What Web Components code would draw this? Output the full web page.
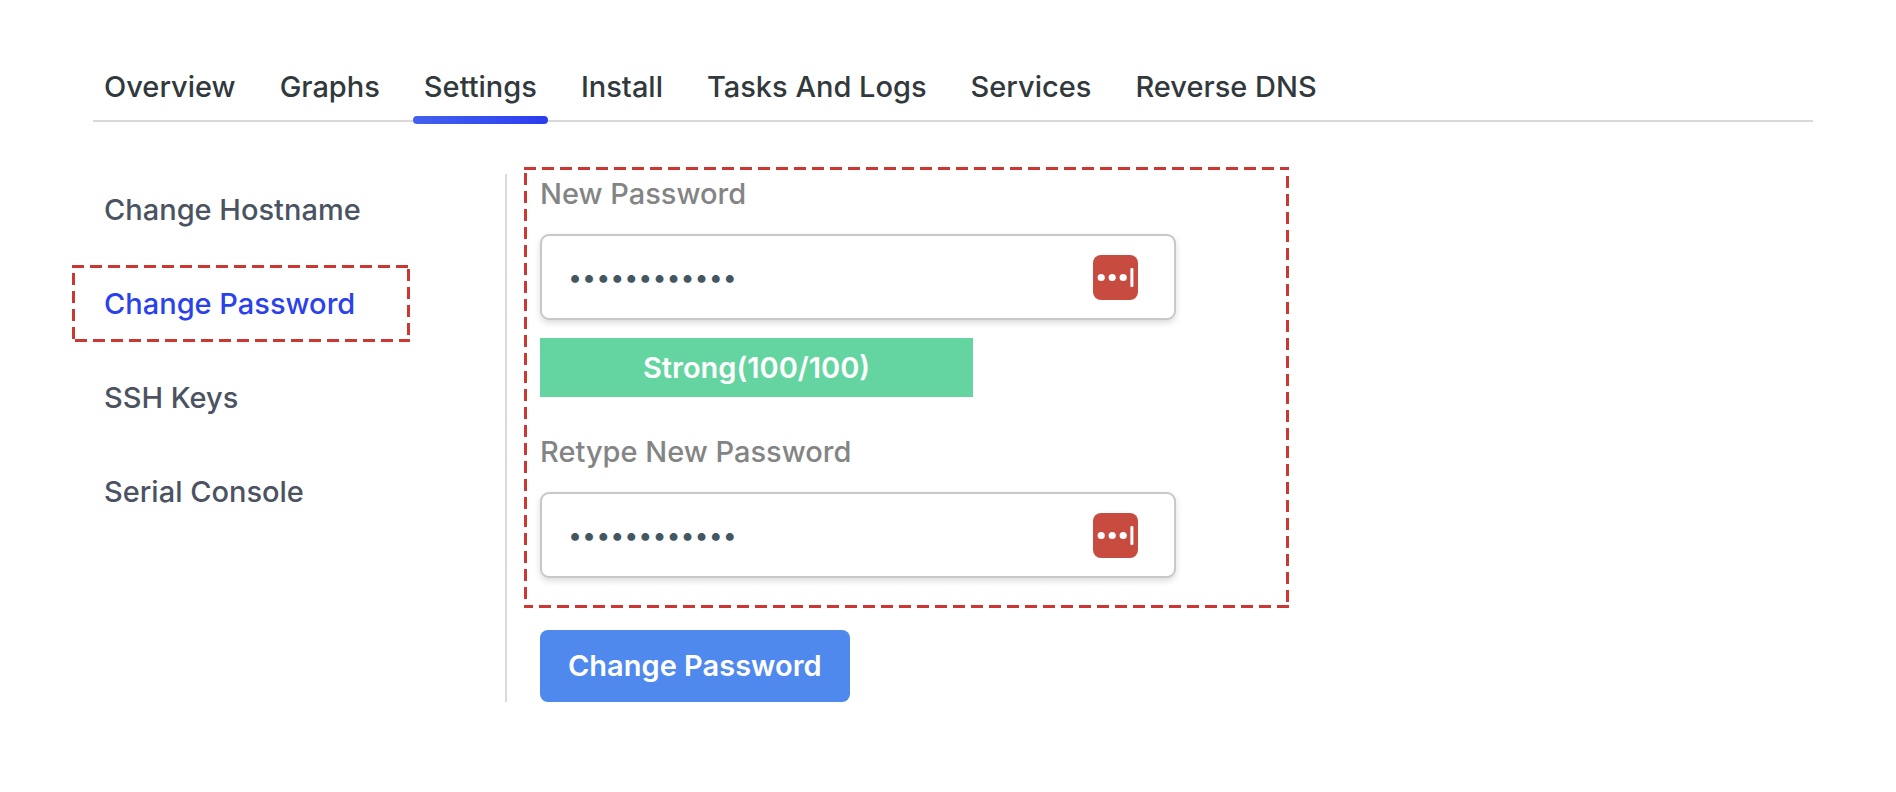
<!DOCTYPE html>
<html lang="en">
<head>
<meta charset="utf-8">
<title>Settings - Change Password</title>
<style>
	body {
		margin: 0;
		background: #FFFFFF;
		font-family: Inter, "Open Sans", sans-serif;
		font-size: 29px;
		font-weight: 500;
		line-height: 40px;
	}
</style>
</head>
<body>
<server-page>
	<tab-bar slot="tabs">
		<tab-link href="#overview">Overview</tab-link>
		<tab-link href="#graphs">Graphs</tab-link>
		<tab-link href="#settings" active>Settings</tab-link>
		<tab-link href="#install">Install</tab-link>
		<tab-link href="#tasks">Tasks And Logs</tab-link>
		<tab-link href="#services">Services</tab-link>
		<tab-link href="#rdns">Reverse DNS</tab-link>
	</tab-bar>
	<side-menu slot="menu">
		<menu-link href="#hostname">Change Hostname</menu-link>
		<dashed-callout class="menu-callout">
			<menu-link href="#password" active>Change Password</menu-link>
		</dashed-callout>
		<menu-link href="#ssh">SSH Keys</menu-link>
		<menu-link href="#console">Serial Console</menu-link>
	</side-menu>
	<password-form></password-form>
</server-page>

<script>
class ServerPage extends HTMLElement {
	constructor() {
		super();
		let shadowRoot = this.attachShadow({mode: 'open'});
		shadowRoot.innerHTML = `
		<style>
		:host {
			display: block;
			padding: 67px 83px 60px 93px;
		}
		.content {
			display: grid;
			grid-template-columns: 414px 1fr;
			column-gap: 33px;
			margin-top: 52px;
		}
		</style>
		<slot name="tabs"></slot>
		<div class="content">
			<slot name="menu"></slot>
			<main><slot></slot></main>
		</div>`;
	}
}
window.customElements.define('server-page', ServerPage);

class TabBar extends HTMLElement {
	constructor() {
		super();
		let shadowRoot = this.attachShadow({mode: 'open'});
		shadowRoot.innerHTML = `
		<style>
		:host {
			display: block;
			border-bottom: 2px solid #DBD8D8;
		}
		nav {
			display: flex;
			gap: 22px;
		}
		</style>
		<nav aria-label="Server"><slot></slot></nav>`;
	}
}
window.customElements.define('tab-bar', TabBar);

class BaseLink extends HTMLElement {
	connectedCallback() {
		const link = this.shadowRoot.querySelector('a');
		link.href = this.getAttribute('href');
		if (this.hasAttribute('active')) link.setAttribute('aria-current', 'page');
	}
}

class TabLink extends BaseLink {
	constructor() {
		super();
		let shadowRoot = this.attachShadow({mode: 'open'});
		shadowRoot.innerHTML = `
		<style>
		:host {
			display: block;
			position: relative;
			white-space: nowrap;
		}
		a {
			display: block;
			padding: 0 11px 13px;
			color: #32393D;
			text-decoration: none;
		}
		/* marker lies over the rule of the bar */
		:host([active])::after {
			content: '';
			position: absolute;
			left: 0;
			right: 0;
			bottom: -4px;
			height: 8px;
			border-radius: 4px;
			background: linear-gradient(90deg, #4361EE, #2B3DF0);
		}
		</style>
		<a><slot></slot></a>`;
	}
}
window.customElements.define('tab-link', TabLink);

class SideMenu extends HTMLElement {
	constructor() {
		super();
		let shadowRoot = this.attachShadow({mode: 'open'});
		shadowRoot.innerHTML = `
		<style>
		:host {
			display: block;
			box-sizing: border-box;
			padding: 16px 0 0 11px;
			border-right: 2px solid #DCD9DB;
		}
		nav {
			display: flex;
			flex-direction: column;
			gap: 54px;
		}
		::slotted(.menu-callout) {
			--callout-inset: -19px 95px -18px -32px;
		}
		</style>
		<nav aria-label="Settings"><slot></slot></nav>`;
	}
}
window.customElements.define('side-menu', SideMenu);

class MenuLink extends BaseLink {
	constructor() {
		super();
		let shadowRoot = this.attachShadow({mode: 'open'});
		shadowRoot.innerHTML = `
		<style>
		:host {
			display: block;
		}
		a {
			color: #4B5362;
			text-decoration: none;
		}
		:host([active]) a {
			color: #2A41EC;
		}
		</style>
		<a><slot></slot></a>`;
	}
}
window.customElements.define('menu-link', MenuLink);

class DashedCallout extends HTMLElement {
	constructor() {
		super();
		let shadowRoot = this.attachShadow({mode: 'open'});
		shadowRoot.innerHTML = `
		<style>
		:host {
			display: block;
			position: relative;
		}
		.frame {
			position: absolute;
			inset: var(--callout-inset, 0);
			pointer-events: none;
		}
		svg {
			display: block;
			width: 100%;
			height: 100%;
			overflow: hidden;
		}
		/* outer half of the stroke is clipped, 3px stay visible */
		rect {
			fill: none;
			stroke: #CC3731;
			stroke-width: 6;
			stroke-dasharray: 12 6;
		}
		</style>
		<slot></slot>
		<div class="frame"><svg aria-hidden="true"><rect width="100%" height="100%"/></svg></div>`;
	}
}
window.customElements.define('dashed-callout', DashedCallout);

class PasswordField extends HTMLElement {
	constructor() {
		super();
		let shadowRoot = this.attachShadow({mode: 'open'});
		shadowRoot.innerHTML = `
		<style>
		:host {
			display: block;
		}
		label {
			display: block;
			margin-bottom: 20px;
			color: #838584;
		}
		.box {
			display: flex;
			align-items: center;
			box-sizing: border-box;
			max-width: 636px;
			height: 86px;
			padding-right: 36px;
			border: 2px solid #C8C8C8;
			border-radius: 9px;
			background: #FFFFFF;
			box-shadow: 0 3px 6px rgba(0, 0, 0, .14);
		}
		input {
			flex: 1;
			min-width: 0;
			height: 100%;
			box-sizing: border-box;
			padding: 0 26px;
			border: 0;
			outline: none;
			background: none;
			color: #435661;
			font-family: inherit;
			font-size: 25px;
		}
		button {
			display: flex;
			padding: 0;
			border: 0;
			background: none;
			cursor: pointer;
		}
		</style>
		<label for="password"></label>
		<div class="box">
			<input id="password" type="password" autocomplete="new-password">
			<button type="button" aria-label="Password manager">
				<svg viewBox="0 0 45 45" width="45" height="45"><rect width="45" height="45" rx="8" fill="#C84B40"/><g fill="#FFFFFF"><circle cx="8.2" cy="22.5" r="3.6"/><circle cx="19.2" cy="22.5" r="3.6"/><circle cx="30.2" cy="22.5" r="3.6"/><rect x="37.4" y="13" width="3" height="19" rx="1"/></g></svg>
			</button>
		</div>`;
	}

	static get observedAttributes() {
		return ['labeltext', 'value'];
	}

	attributeChangedCallback(attrName, oldVal, newVal) {
		if (attrName == 'labeltext') {
			this.shadowRoot.querySelector('label').textContent = newVal;
		} else {
			this.shadowRoot.querySelector('input').value = newVal;
		}
	}
}
window.customElements.define('password-field', PasswordField);

class PasswordStrength extends HTMLElement {
	constructor() {
		super();
		let shadowRoot = this.attachShadow({mode: 'open'});
		shadowRoot.innerHTML = `
		<style>
		:host {
			display: flex;
			align-items: center;
			justify-content: center;
			max-width: 433px;
			height: 59px;
			background: #64D5A0;
			color: #FFFFFF;
			font-weight: 600;
		}
		</style>
		<slot></slot>`;
	}
}
window.customElements.define('password-strength', PasswordStrength);

class PasswordForm extends HTMLElement {
	constructor() {
		super();
		let shadowRoot = this.attachShadow({mode: 'open'});
		shadowRoot.innerHTML = `
		<style>
		:host {
			display: block;
			max-width: 733px;
		}
		dashed-callout {
			--callout-inset: -7px -16px -30px;
		}
		password-strength {
			margin: 18px 0 35px;
		}
		.submit {
			display: block;
			height: 72px;
			margin-top: 52px;
			padding: 0 28px;
			border: 0;
			border-radius: 8px;
			background: #5089EE;
			color: #FFFFFF;
			font: inherit;
			font-weight: 600;
			cursor: pointer;
		}
		</style>
		<form>
			<dashed-callout>
				<password-field labeltext="New Password" value="correcthorse"></password-field>
				<password-strength role="status">Strong(100/100)</password-strength>
				<password-field labeltext="Retype New Password" value="correcthorse"></password-field>
			</dashed-callout>
			<button class="submit" type="submit">Change Password</button>
		</form>`;
	}
}
window.customElements.define('password-form', PasswordForm);
</script>
</body>
</html>
